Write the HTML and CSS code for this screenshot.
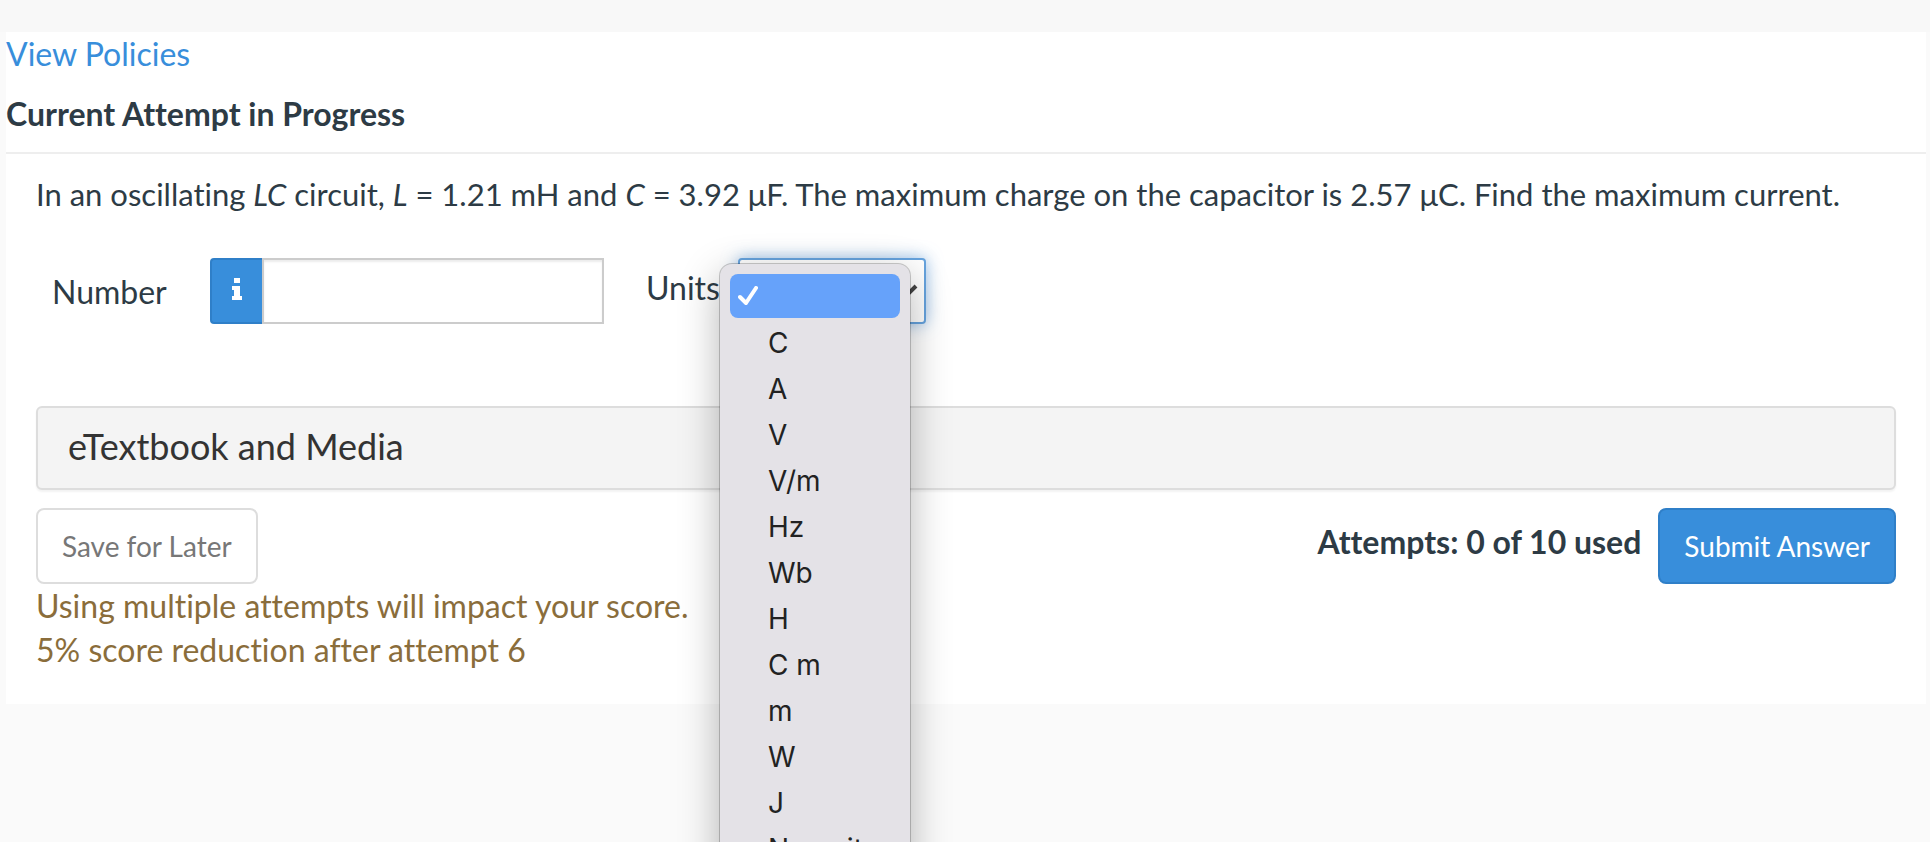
FILE: index.html
```
<!DOCTYPE html>
<html lang="en">
<head>
<meta charset="utf-8">
<meta name="viewport" content="width=device-width, initial-scale=1">
<title>Current Attempt in Progress</title>
<link rel="stylesheet" href="styles.css">
</head>
<body>
<div class="page">
  <header class="topbar"></header>
  <main class="card">
    <p class="policies"><a class="link" href="#policies">View Policies</a></p>
    <h1 class="title">Current Attempt in Progress</h1>
    <div class="content">
      <p class="question">In an oscillating <i>LC</i> circuit, <i>L</i> = 1.21 mH and <i>C</i> = 3.92 μF. The maximum charge on the capacitor is 2.57 μC. Find the maximum current.</p>
      <form class="answer">
        <label class="number-label" for="number">Number</label>
        <div class="number-group">
          <button class="info" type="button" aria-label="Information">
            <svg class="info-icon" width="12" height="24" viewBox="0 0 12 24" aria-hidden="true"><path fill="currentColor" d="M3 1h6v5H3zM1 9h8v10h2v4H1v-4h2v-6H1z"/></svg>
          </button>
          <input class="number-input" id="number" type="text">
        </div>
        <label class="units-label" for="units">Units</label>
        <div class="units">
          <select class="units-select" id="units"><option></option></select>
          <svg class="chevron" width="22" height="14" viewBox="0 0 22 14" aria-hidden="true"><path fill="none" stroke="currentColor" stroke-width="4" d="M2 2l9 9 9-9"/></svg>
          <ul class="menu" role="listbox" aria-label="Units">
            <li class="item selected" role="option" aria-selected="true"><svg class="check" width="20" height="20" viewBox="0 0 20 20" aria-hidden="true"><path fill="none" stroke="currentColor" stroke-width="4" stroke-linecap="round" stroke-linejoin="round" d="M2 11l6 6L18 2"/></svg></li>
            <li class="item" role="option">C</li>
            <li class="item" role="option">A</li>
            <li class="item" role="option">V</li>
            <li class="item" role="option">V/m</li>
            <li class="item" role="option">Hz</li>
            <li class="item" role="option">Wb</li>
            <li class="item" role="option">H</li>
            <li class="item" role="option">C m</li>
            <li class="item" role="option">m</li>
            <li class="item" role="option">W</li>
            <li class="item" role="option">J</li>
            <li class="item" role="option">No units</li>
          </ul>
        </div>
      </form>
      <button class="panel" type="button">eTextbook and Media</button>
      <div class="actions">
        <button class="btn save" type="button">Save for Later</button>
        <span class="attempts">Attempts: 0 of 10 used</span>
        <button class="btn submit" type="button">Submit Answer</button>
      </div>
      <p class="warning">Using multiple attempts will impact your score.<br>5% score reduction after attempt 6</p>
    </div>
  </main>
</div>
</body>
</html>
```
FILE: styles.css
```
* {
  box-sizing: border-box;
}

body {
  margin: 0;
  background: #fafafa;
  color: #2d3b45;
  font: 32px/44px Lato, sans-serif;
  font-variant-ligatures: none;
}

.page {
  min-height: 100vh;
  overflow: hidden;
}

.topbar {
  height: 32px;
  background: #f8f8f8;
}

.card {
  margin: 0 4px 0 6px;
  padding-bottom: 32px;
  background: #fff;
}

.policies,
.question,
.warning {
  margin: 0;
}

.question {
  font-size: 31px;
}

.link {
  color: #388edb;
  text-decoration: none;
}

.title {
  margin: 16px 0 0;
  padding-bottom: 16px;
  border-bottom: 2px solid #eee;
  font-size: 32px;
  font-weight: 700;
}

.content {
  padding: 18px 30px 0;
}

.answer {
  display: flex;
  align-items: flex-start;
  margin: 42px 0 82px;
  padding-left: 16px;
}

.number-label {
  width: 158px;
  padding-top: 12px;
}

.number-group {
  display: flex;
  width: 394px;
  height: 66px;
}

.info {
  display: flex;
  align-items: center;
  justify-content: center;
  width: 52px;
  padding: 0 0 4px;
  border: 2px solid #2f7fc8;
  border-right: 0;
  border-radius: 4px 0 0 4px;
  background: #388edb;
  color: #fff;
}

.number-input {
  flex: 1;
  min-width: 0;
  padding: 0 16px;
  border: 2px solid #ccc;
  box-shadow: inset 0 2px 2px rgba(0, 0, 0, 0.08);
  font: inherit;
}

.units-label {
  padding: 8px 0 0 42px;
  width: 134px;
}

.units {
  position: relative;
}

.units-select {
  display: block;
  width: 188px;
  height: 66px;
  border: 2px solid #66a3de;
  border-radius: 4px;
  outline: 0;
  appearance: none;
  background: #fff;
  box-shadow: 0 0 16px rgba(82, 150, 220, 0.6);
  font: inherit;
}

.chevron {
  position: absolute;
  top: 26px;
  right: 8px;
  color: #444;
}

.menu {
  position: absolute;
  top: 6px;
  left: -18px;
  width: 190px;
  margin: 0;
  padding: 10px;
  border-radius: 12px;
  background: #e4e2e7;
  box-shadow: 0 0 0 1px rgba(0, 0, 0, 0.2), 0 12px 40px rgba(0, 0, 0, 0.3);
  color: #222;
  font: 28px/46px Inter, sans-serif;
  list-style: none;
}

.item {
  height: 46px;
  padding-left: 38px;
  white-space: nowrap;
}

.selected {
  display: flex;
  align-items: center;
  height: 44px;
  margin-bottom: 2px;
  padding-left: 8px;
  border-radius: 8px;
  background: #66a2fa;
  color: #fff;
}

.panel {
  display: block;
  width: 100%;
  padding: 16px 30px 20px;
  border: 2px solid #ddd;
  border-radius: 6px;
  background: #f4f4f4;
  box-shadow: 0 2px 2px rgba(0, 0, 0, 0.05);
  color: #333;
  font: 36px/44px Lato, sans-serif;
  text-align: left;
}

.actions {
  display: flex;
  align-items: flex-start;
  margin-top: 18px;
}

.btn {
  padding: 14px 24px;
  border: 2px solid #ddd;
  border-radius: 8px;
  background: #fff;
  color: #777;
  font: 28px/44px Lato, sans-serif;
}

.attempts {
  margin: 12px 17px 0 auto;
  font-weight: 700;
}

.submit {
  border-color: #2f7fc8;
  background: #388edb;
  color: #fff;
}

.warning {
  color: #8a6d3b;
}
```
